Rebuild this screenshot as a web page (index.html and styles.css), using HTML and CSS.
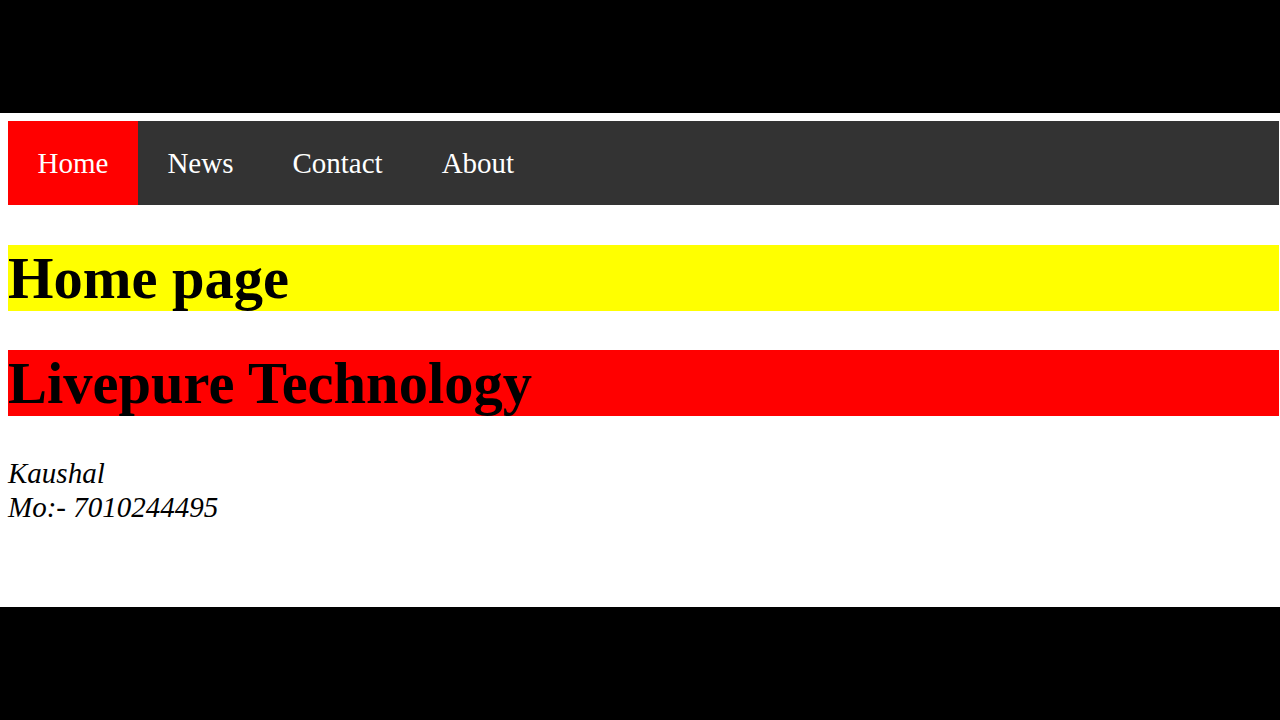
FILE: index.html
```html
<!DOCTYPE html>
<html lang="en">
<head>
<meta charset="utf-8">
<title>Home page</title>
<link rel="stylesheet" href="styles.css">
</head>
<body>
<div class="screen">
  <nav class="topnav">
    <a class="active" href="#home">Home</a>
    <a href="#news">News</a>
    <a href="#contact">Contact</a>
    <a href="#about">About</a>
  </nav>
  <h1 class="title">Home page</h1>
  <h1 class="brand">Livepure Technology</h1>
  <address class="contact">Kaushal<br>Mo:- 7010244495</address>
</div>
</body>
</html>
```

FILE: styles.css
```css
html, body {
  margin: 0;
  padding: 0;
  background: #000;
}
.screen {
  margin-top: 113px;
  height: 494px;
  box-sizing: border-box;
  padding: 8px 1px 8px 8px;
  background: #fff;
  font-family: "Liberation Serif", "Times New Roman", serif;
  font-size: 29px;
  color: #000;
  overflow: hidden;
}
.topnav {
  display: flex;
  height: 84px;
  background: #333;
}
.topnav a {
  display: flex;
  align-items: center;
  padding: 0 29.5px;
  color: #fff;
  text-decoration: none;
  font-size: 29px;
}
.topnav a.active {
  background: #f00;
}
.title,
.brand {
  font-size: 58.5px;
  font-weight: bold;
  margin: 39px 0;
  padding-top: 1px;
  line-height: 65px;
}
.title {
  margin-top: 40px;
  background: #ff0;
}
.brand {
  background: #f00;
}
.contact {
  margin-top: 40px;
  font-style: italic;
  line-height: 34px;
}
```
